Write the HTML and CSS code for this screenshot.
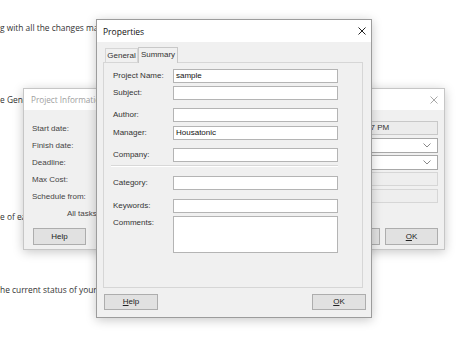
FILE: index.html
```html
<!DOCTYPE html>
<html lang="en">
<head>
    <meta charset="UTF-8">
    <title>Properties</title>
    <link rel="stylesheet" href="styles.css">
</head>
<body>
    <!-- document text behind the dialogs -->
    <div class="page">
        <p class="line">g with all the changes made to the project file so far.</p>
        <p class="line line-2">e General tab shows the basic information about the project.</p>
        <p class="line line-3">e of each task and the calendar used.</p>
        <p class="line line-4">he current status of your project at a glance.</p>
    </div>

    <!-- inactive dialog -->
    <div class="window window-back">
        <div class="titlebar">
            <span class="title">Project Information for 'sample'</span>
            <svg class="close" width="8" height="8" viewBox="0 0 8 8"><path d="M0.5 0.5 L7.5 7.5 M7.5 0.5 L0.5 7.5" stroke="#a8a8a8" stroke-width="1" fill="none"/></svg>
        </div>
        <div class="back-body">
            <div class="back-row">
                <span class="back-label">Start date:</span>
                <span class="back-field back-field-ro">Thu 3/14/19 10:47 PM</span>
            </div>
            <div class="back-row">
                <span class="back-label">Finish date:</span>
                <span class="back-field back-combo">
                    <svg width="8" height="5" viewBox="0 0 8 5"><polyline points="0.5,0.5 4,4 7.5,0.5" stroke="#888" fill="none"/></svg>
                </span>
            </div>
            <div class="back-row">
                <span class="back-label">Deadline:</span>
                <span class="back-field back-combo">
                    <svg width="8" height="5" viewBox="0 0 8 5"><polyline points="0.5,0.5 4,4 7.5,0.5" stroke="#888" fill="none"/></svg>
                </span>
            </div>
            <div class="back-row">
                <span class="back-label">Max Cost:</span>
                <span class="back-field back-field-off"></span>
            </div>
            <div class="back-row">
                <span class="back-label">Schedule from:</span>
                <span class="back-field back-field-off"></span>
            </div>
            <div class="back-row">
                <span class="back-note">All tasks begin as soon as possible.</span>
            </div>
            <div class="back-footer">
                <span class="btn btn-back">Help</span>
                <span class="back-actions">
                    <span class="btn btn-back">Cancel</span>
                    <span class="btn btn-back"><u>O</u>K</span>
                </span>
            </div>
        </div>
    </div>

    <!-- active dialog -->
    <div class="window window-front">
        <div class="titlebar">
            <span class="title">Properties</span>
            <svg class="close" width="8" height="8" viewBox="0 0 8 8"><path d="M0.5 0.5 L7.5 7.5 M7.5 0.5 L0.5 7.5" stroke="#222" stroke-width="1" fill="none"/></svg>
        </div>
        <div class="front-body">
            <div class="tabs">
                <span class="tab tab-general">General</span>
                <span class="tab tab-active">Summary</span>
            </div>
            <div class="panel">
                <div class="row">
                    <span class="label">Project Name:</span>
                    <span class="field">sample</span>
                </div>
                <div class="row gap-3">
                    <span class="label">Subject:</span>
                    <span class="field"></span>
                </div>
                <div class="row gap-8">
                    <span class="label">Author:</span>
                    <span class="field"></span>
                </div>
                <div class="row gap-4">
                    <span class="label">Manager:</span>
                    <span class="field">Housatonic</span>
                </div>
                <div class="row gap-8">
                    <span class="label">Company:</span>
                    <span class="field"></span>
                </div>
                <div class="separator"></div>
                <div class="row gap-9">
                    <span class="label">Category:</span>
                    <span class="field"></span>
                </div>
                <div class="row gap-9">
                    <span class="label">Keywords:</span>
                    <span class="field"></span>
                </div>
                <div class="row row-top gap-3">
                    <span class="label">Comments:</span>
                    <span class="field field-area"></span>
                </div>
            </div>
            <div class="footer">
                <span class="btn"><u>H</u>elp</span>
                <span class="btn"><u>O</u>K</span>
            </div>
        </div>
    </div>
</body>
</html>
```

FILE: styles.css
```css
body {
    margin: 0;
    width: 474px;
    height: 339px;
    overflow: hidden;
    position: relative;
    background: #fff;
    font-family: "Liberation Sans", Arial, sans-serif;
    color: #333;
}
.page {
    padding-top: 20px;
    font-family: "Open Sans", sans-serif;
    font-size: 8.4px;
    color: #333;
}
.line {
    margin: 0;
    line-height: 16px;
    white-space: nowrap;
}
.line-2 {
    margin-top: 56px;
}
.line-3 {
    margin-top: 101px;
}
.line-4 {
    margin-top: 57px;
}

/* windows */
.window {
    position: absolute;
    box-sizing: border-box;
    display: flex;
    flex-direction: column;
    background: #f0f0f0;
    border: 1px solid #9c9c9c;
    box-shadow: 0 2px 10px rgba(0, 0, 0, 0.22);
}
.window-back {
    left: 23px;
    top: 88px;
    width: 422px;
    height: 162px;
    border-color: #c6c6c6;
}
.window-front {
    left: 96px;
    top: 19px;
    width: 276px;
    height: 299px;
}
.titlebar {
    display: flex;
    align-items: center;
    justify-content: space-between;
    background: #fff;
    white-space: nowrap;
    overflow: hidden;
}
.window-front .titlebar {
    height: 22px;
    padding: 0 5px 0 6px;
}
.window-back .titlebar {
    height: 21px;
    padding: 0 6px 0 7px;
}
.title {
    font-family: "Open Sans", sans-serif;
    font-size: 8.5px;
    color: #111;
}
.window-back .title {
    font-size: 8.2px;
    color: #a0a0a0;
}
.close {
    display: block;
    flex-shrink: 0;
}

/* back dialog */
.back-body {
    flex: 1;
    display: flex;
    flex-direction: column;
    padding: 11px 6px 4px 8px;
    font-size: 8px;
}
.back-row {
    display: flex;
    align-items: center;
    justify-content: space-between;
    height: 14px;
    margin-bottom: 3px;
    color: #444;
}
.back-field {
    box-sizing: border-box;
    width: 140px;
    height: 14px;
    border: 1px solid #cfcfcf;
    padding-left: 3px;
    line-height: 12px;
    white-space: nowrap;
    overflow: hidden;
}
.back-field-ro {
    background: #ececec;
    color: #333;
    border-color: #c8c8c8;
    padding-left: 11px;
}
.back-combo {
    display: flex;
    align-items: center;
    justify-content: flex-end;
    padding-right: 6px;
    background: #fff;
    border-color: #a8a8a8;
    height: 15px;
}
.back-field-off {
    background: #eeeeee;
    border-color: #d6d6d6;
}
.back-note {
    padding-left: 35px;
    white-space: nowrap;
}
.back-footer {
    margin-top: auto;
    display: flex;
    justify-content: space-between;
    padding-left: 1px;
}
.back-actions {
    display: flex;
    gap: 5px;
}

/* front dialog */
.front-body {
    flex: 1;
    display: flex;
    flex-direction: column;
    padding: 5px 5px 7px 6px;
}
.tabs {
    display: flex;
    align-items: flex-end;
    height: 15px;
    padding-left: 2px;
}
.tab {
    box-sizing: border-box;
    height: 14px;
    border: 1px solid #d6d6d6;
    border-bottom: none;
    background: #f0f0f0;
    font-size: 8px;
    line-height: 13px;
    text-align: center;
    color: #333;
}
.tab-general {
    width: 33px;
}
.tab-active {
    position: relative;
    width: 40px;
    height: 16px;
    margin-bottom: -1px;
    border-color: #c8c8c8;
    line-height: 14px;
}
.panel {
    box-sizing: border-box;
    width: 260px;
    height: 226px;
    border: 1px solid #d6d6d6;
    padding: 6px 0 0 9px;
}
.row {
    display: flex;
    align-items: center;
}
.row-top {
    align-items: flex-start;
}
.row-top .label {
    padding-top: 2px;
}
.gap-3 {
    margin-top: 3px;
}
.gap-4 {
    margin-top: 4px;
}
.gap-8 {
    margin-top: 8px;
}
.gap-9 {
    margin-top: 9px;
}
.label {
    width: 60px;
    font-size: 8px;
    line-height: 10px;
    color: #333;
    white-space: nowrap;
}
.field {
    box-sizing: border-box;
    width: 165px;
    height: 14px;
    background: #fff;
    border: 1px solid #b4b4b4;
    padding-left: 2px;
    font-size: 8px;
    line-height: 12px;
    color: #111;
}
.field-area {
    height: 37px;
}
.separator {
    width: 227px;
    margin: 3px 0 0 -2px;
    border-top: 1px solid #d8d8d8;
    border-bottom: 1px solid #fff;
}
.footer {
    display: flex;
    justify-content: space-between;
    margin-top: 6px;
    padding-left: 1px;
}
.btn {
    box-sizing: border-box;
    width: 54px;
    height: 16px;
    background: #e1e1e1;
    border: 1px solid #adadad;
    font-size: 8px;
    line-height: 14px;
    text-align: center;
    color: #222;
}
.btn-back {
    width: 53px;
    height: 17px;
    line-height: 15px;
}
```
